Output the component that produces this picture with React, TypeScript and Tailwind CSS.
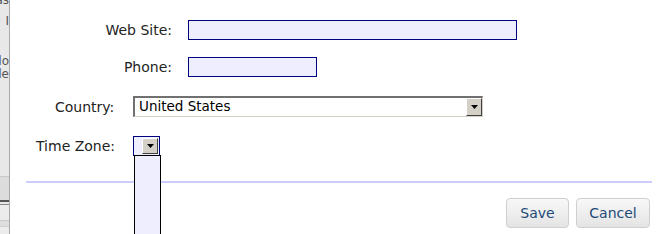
import React from "react";

const labelCls = "text-[14px] text-[#222] leading-none";

const SelectArrow: React.FC<{ className?: string }> = ({ className = "" }) => (
  <span
    className={`flex h-full w-[16px] shrink-0 items-center justify-center border-t border-l border-t-white border-l-white border-r border-b border-r-[#404040] border-b-[#404040] bg-[#d4d0c8] ${className}`}
  >
    <svg width="7" height="4" viewBox="0 0 7 4">
      <path d="M0 0h7L3.5 4z" fill="#000" />
    </svg>
  </span>
);

const SideStrip: React.FC = () => (
  <div className="flex h-full w-[10px] shrink-0 flex-col border-r border-r-[#a8a8a8] bg-[#e8e8e8] text-[12px] leading-[12px] text-[#555]">
    <div className="mt-[-6px] flex h-[12px] justify-end overflow-hidden whitespace-nowrap">
      <span>as</span>
    </div>
    <div className="mt-[9px] flex h-[12px] justify-end overflow-hidden whitespace-nowrap">
      <span>•&nbsp;I</span>
    </div>
    <div className="mt-[28px] flex h-[12px] justify-end overflow-hidden whitespace-nowrap">
      <span>do</span>
    </div>
    <div className="mt-[1px] flex h-[12px] justify-end overflow-hidden whitespace-nowrap">
      <span>de</span>
    </div>
    <div className="flex-1" />
    <div className="h-[24px] border-t border-t-[#c8c8c8] bg-[#dcdcdc]" />
    <div className="h-[2px] bg-[#555]" />
    <div className="h-[2px] bg-[#e8e8e8]" />
    <div className="h-[1px] bg-[#888]" />
    <div className="h-[15px] bg-[#ececec]" />
    <div className="h-[6px] border-t border-t-[#c8c8c8] bg-[#dedede]" />
    <div className="h-[8px] border-t border-t-[#d0d0d0] bg-[#ececec]" />
  </div>
);

export default function App() {
  return (
    <div
      className="relative flex h-[234px] w-[671px] overflow-hidden bg-white"
      style={{ fontFamily: '"DejaVu Sans", Verdana, sans-serif' }}
    >
      <SideStrip />
      <div className="relative flex flex-1 flex-col">
        {/* Web Site */}
        <div className="mt-[20px] flex h-[20px] items-center">
          <span className={`w-[162px] text-right ${labelCls}`}>Web Site:</span>
          <div className="ml-[16px] h-[20px] w-[329px] border border-[#00007f] bg-[#eeeeff]" />
        </div>
        {/* Phone */}
        <div className="mt-[17px] flex h-[20px] items-center">
          <span className={`w-[162px] text-right ${labelCls}`}>Phone:</span>
          <div className="ml-[16px] h-[20px] w-[129px] border border-[#00007f] bg-[#eeeeff]" />
        </div>
        {/* Country */}
        <div className="mt-[19px] flex h-[21px] items-center pl-[45px]">
          <span className={`w-[78px] ${labelCls}`}>Country:</span>
          <div className="flex h-[21px] w-[350px] border-t-2 border-l-2 border-t-[#707070] border-l-[#707070] border-r border-b border-r-[#d4d0c8] border-b-[#d4d0c8] bg-white">
            <span className="flex flex-1 items-center pl-[4px] text-[13.5px] leading-none text-black">
              United States
            </span>
            <SelectArrow />
          </div>
        </div>
        {/* Time Zone */}
        <div className="mt-[19px] flex h-[20px] items-center pl-[26px]">
          <span className={`w-[97px] ${labelCls}`}>Time Zone:</span>
          <div className="relative flex h-[20px] w-[27px] border border-[#00007f] bg-[#eeeeff] p-[1px]">
            <div className="flex-1" />
            <SelectArrow />
            <div className="absolute top-[18px] left-0 h-[100px] w-[27px] border border-black bg-[#eeeeff]" />
          </div>
        </div>
        {/* divider */}
        <div className="mt-[25px] ml-[16px] h-[2px] w-[626px] bg-[#ccccff]" />
        {/* buttons */}
        <div className="mt-[15px] flex justify-end gap-[7px] pr-[21px]">
          <button className="h-[30px] w-[63px] rounded-[4px] border border-[#cfcfcf] bg-gradient-to-b from-[#f8f8f8] to-[#e4e4e4] text-[14px] text-[#1e4a78]">
            Save
          </button>
          <button className="h-[30px] w-[74px] rounded-[4px] border border-[#cfcfcf] bg-gradient-to-b from-[#f8f8f8] to-[#e4e4e4] text-[14px] text-[#1e4a78]">
            Cancel
          </button>
        </div>
      </div>
    </div>
  );
}
